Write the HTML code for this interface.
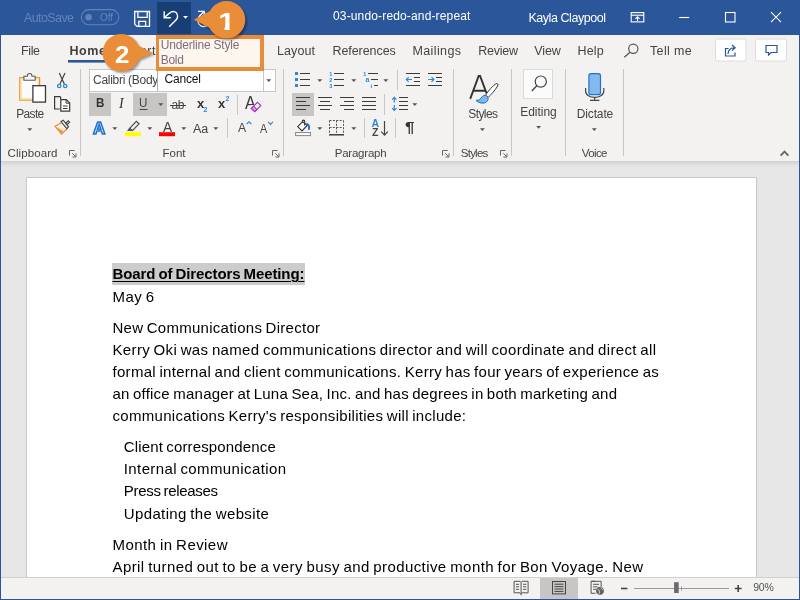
<!DOCTYPE html>
<html><head><meta charset="utf-8"><title>Word</title>
<style>
*{box-sizing:border-box;margin:0;padding:0}
html,body{width:800px;height:600px;overflow:hidden;background:#e6e6e6;font-family:"Liberation Sans",sans-serif}
#app{position:absolute;left:0;top:0;width:800px;height:600px;overflow:hidden;background:#e6e6e6;will-change:transform}
.abs,.t{position:absolute;white-space:pre}
.t{font-size:12px;color:#444}
#title{position:absolute;left:0;top:0;width:800px;height:35px;background:#2b579a}
#tabs{position:absolute;left:1px;top:35px;width:798px;height:31px;background:#f3f2f1}
#ribbon{position:absolute;left:1px;top:66px;width:798px;height:95px;background:#f3f2f1}
#shadow{position:absolute;left:1px;top:161px;width:798px;height:6px;background:linear-gradient(#cfcfcf,#e0e0e0 60%,#e6e6e6)}
#page{position:absolute;left:26px;top:177px;width:731px;height:400px;background:#fff;border:1px solid #c8c8c8;border-bottom:none}
#status{position:absolute;left:1px;top:577px;width:798px;height:22px;background:#f3f2f1;border-top:1px solid #d0d0d0}
.hl{position:absolute;background:#c8c6c4}
</style></head><body><div id="app">
<div id="title"></div>
<div id="tabs"></div>
<div id="ribbon"></div>
<div id="shadow"></div>
<div id="page"></div>
<div id="status"></div>
<!-- ribbon button states -->
<div class="hl" style="left:89px;top:93px;width:22px;height:22.5px"></div>
<div class="hl" style="left:133px;top:93px;width:34px;height:22.5px"></div>
<div class="hl" style="left:292px;top:93px;width:22px;height:22.5px"></div>
<div class="hl" style="left:540px;top:578px;width:38px;height:21px"></div>
<!-- font name combo -->
<div class="abs" style="left:89px;top:69px;width:187px;height:22.5px;background:#fff;border:1px solid #c6c6c6"></div>
<div class="abs" style="left:262.5px;top:69px;width:1px;height:22.5px;background:#c6c6c6"></div>
<!-- editing icon box -->
<div class="abs" style="left:523px;top:69px;width:30px;height:30px;background:#fbfbfb;border:1px solid #dadada"></div>
<!-- heading selection -->
<div class="abs" style="left:112px;top:263px;width:193px;height:21.5px;background:#cccccc"></div>
<div class="t" style="left:24.0px;top:11px;font-size:12.5px;line-height:15px;letter-spacing:-0.603px;color:#6485bc;">AutoSave</div>
<div class="t" style="left:100.1px;top:12px;font-size:10px;line-height:12px;letter-spacing:-0.128px;color:#6485bc;">Off</div>
<div class="t" style="left:333.0px;top:9px;font-size:12px;line-height:14px;letter-spacing:0.150px;color:#fff;">03-undo-redo-and-repeat</div>
<div class="t" style="left:528.4px;top:11px;font-size:12.5px;line-height:15px;letter-spacing:-0.445px;color:#fff;">Kayla Claypool</div>
<div class="t" style="left:21.0px;top:44px;font-size:12.5px;line-height:15px;letter-spacing:-0.385px;color:#444;">File</div>
<div class="t" style="left:69.5px;top:44px;font-size:12.5px;line-height:15px;letter-spacing:0.589px;color:#404040;font-weight:700;">Home</div>
<div class="t" style="left:122.0px;top:44px;font-size:12.5px;line-height:15px;letter-spacing:0.427px;color:#444;">Insert</div>
<div class="t" style="left:277.0px;top:44px;font-size:12.5px;line-height:15px;letter-spacing:0.094px;color:#444;">Layout</div>
<div class="t" style="left:332.5px;top:44px;font-size:12.5px;line-height:15px;letter-spacing:-0.071px;color:#444;">References</div>
<div class="t" style="left:412.5px;top:44px;font-size:12.5px;line-height:15px;letter-spacing:0.377px;color:#444;">Mailings</div>
<div class="t" style="left:478.3px;top:44px;font-size:12.5px;line-height:15px;letter-spacing:-0.260px;color:#444;">Review</div>
<div class="t" style="left:534.3px;top:44px;font-size:12.5px;line-height:15px;letter-spacing:-0.125px;color:#444;">View</div>
<div class="t" style="left:577.5px;top:44px;font-size:12.5px;line-height:15px;letter-spacing:0.194px;color:#444;">Help</div>
<div class="t" style="left:650.0px;top:44px;font-size:12.5px;line-height:15px;letter-spacing:0.368px;color:#444;">Tell me</div>
<div class="t" style="left:16.3px;top:107px;font-size:12px;line-height:14px;letter-spacing:-0.697px;color:#444;">Paste</div>
<div class="t" style="left:7.5px;top:146px;font-size:11.5px;line-height:14px;letter-spacing:0.096px;color:#444;">Clipboard</div>
<div class="t" style="left:93.0px;top:73px;font-size:12px;line-height:14px;letter-spacing:-0.284px;color:#444;">Calibri (Body)</div>
<div class="t" style="left:162.5px;top:146px;font-size:11.5px;line-height:14px;letter-spacing:-0.005px;color:#444;">Font</div>
<div class="t" style="left:334.7px;top:146px;font-size:11.5px;line-height:14px;letter-spacing:-0.215px;color:#444;">Paragraph</div>
<div class="t" style="left:468.3px;top:107px;font-size:12px;line-height:14px;letter-spacing:-0.598px;color:#444;">Styles</div>
<div class="t" style="left:460.8px;top:146px;font-size:11.5px;line-height:14px;letter-spacing:-0.766px;color:#444;">Styles</div>
<div class="t" style="left:520.3px;top:105px;font-size:12px;line-height:14px;letter-spacing:-0.051px;color:#444;">Editing</div>
<div class="t" style="left:576.7px;top:107px;font-size:12px;line-height:14px;letter-spacing:-0.127px;color:#444;">Dictate</div>
<div class="t" style="left:581.7px;top:146px;font-size:11.5px;line-height:14px;letter-spacing:-0.585px;color:#444;">Voice</div>
<div class="t" style="left:753.2px;top:581px;font-size:10.5px;line-height:13px;letter-spacing:-0.208px;color:#555;">90%</div>
<div class="t" style="left:112.5px;top:265px;font-size:15px;line-height:18px;letter-spacing:-0.097px;color:#000;font-weight:700;word-spacing:-1px;text-decoration:underline;text-decoration-thickness:1px;text-underline-offset:1.5px;">Board of Directors Meeting:</div>
<div class="t" style="left:112.5px;top:288px;font-size:15px;line-height:18px;letter-spacing:0.410px;color:#000;word-spacing:-1px;">May 6</div>
<div class="t" style="left:112.5px;top:319px;font-size:15px;line-height:18px;letter-spacing:0.267px;color:#000;word-spacing:-1px;">New Communications Director</div>
<div class="t" style="left:112.5px;top:341px;font-size:15px;line-height:18px;letter-spacing:0.348px;color:#000;word-spacing:-1px;">Kerry Oki was named communications director and will coordinate and direct all</div>
<div class="t" style="left:112.5px;top:363px;font-size:15px;line-height:18px;letter-spacing:0.300px;color:#000;word-spacing:-1px;">formal internal and client communications. Kerry has four years of experience as</div>
<div class="t" style="left:112.5px;top:385px;font-size:15px;line-height:18px;letter-spacing:0.219px;color:#000;word-spacing:-1px;">an office manager at Luna Sea, Inc. and has degrees in both marketing and</div>
<div class="t" style="left:112.5px;top:407px;font-size:15px;line-height:18px;letter-spacing:0.295px;color:#000;word-spacing:-1px;">communications Kerry&#x27;s responsibilities will include:</div>
<div class="t" style="left:123.8px;top:438px;font-size:15px;line-height:18px;letter-spacing:0.145px;color:#000;word-spacing:-1px;">Client correspondence</div>
<div class="t" style="left:123.8px;top:460px;font-size:15px;line-height:18px;letter-spacing:0.387px;color:#000;word-spacing:-1px;">Internal communication</div>
<div class="t" style="left:123.8px;top:482px;font-size:15px;line-height:18px;letter-spacing:-0.309px;color:#000;word-spacing:-1px;">Press releases</div>
<div class="t" style="left:123.8px;top:505px;font-size:15px;line-height:18px;letter-spacing:0.363px;color:#000;word-spacing:-1px;">Updating the website</div>
<div class="t" style="left:112.5px;top:536px;font-size:15px;line-height:18px;letter-spacing:0.436px;color:#000;word-spacing:-1px;">Month in Review</div>
<div class="t" style="left:112.5px;top:558px;font-size:15px;line-height:18px;letter-spacing:0.417px;color:#000;word-spacing:-1px;">April turned out to be a very busy and productive month for Bon Voyage. New</div>

<svg class="abs" style="left:0;top:0" width="800" height="600" viewBox="0 0 800 600" fill="none" stroke-linecap="butt">
<!-- ===== title bar ===== -->
<rect x="81.4" y="9.6" width="37.4" height="15.2" rx="7.6" stroke="#6183bb" stroke-width="1.1"/>
<circle cx="88.6" cy="17.2" r="3.3" fill="#6183bb"/>
<!-- save -->
<path d="M134.7 11.5H149.5V26.4H137L134.7 24.1Z" stroke="#fff" stroke-width="1.3"/>
<path d="M137.9 11.5V17.3H147.2V11.5" stroke="#fff" stroke-width="1.3"/>
<path d="M138.8 26.4V21.3H145.6V26.4" stroke="#fff" stroke-width="1.3"/>
<!-- undo button -->
<rect x="157" y="2" width="34" height="31.8" fill="#173f75"/>
<path d="M164.2 11.2V17.7H170.8" stroke="#fff" stroke-width="1.4"/>
<path d="M164.6 17.3L169.6 13.1C172.6 10.6 176.2 11.2 177.3 14.6C178.2 17.3 177 19.2 175 21.1L169.2 26.7" stroke="#fff" stroke-width="1.4"/>
<path d="M183 15.9H188L185.5 18.8Z" fill="#fff"/>
<!-- redo (mostly hidden) -->
<path d="M198 11.3H204.2V17.6" stroke="#fff" stroke-width="1.3"/>
<path d="M204 11.6L199.6 16C196.4 19.2 197.4 24 201 25.8C203.2 26.9 206 26.5 208 25" stroke="#fff" stroke-width="1.3"/>
<!-- ribbon display options -->
<rect x="631.2" y="12.6" width="12.6" height="9.3" stroke="#fff" stroke-width="1.1"/>
<path d="M631.2 15.2H643.8" stroke="#fff" stroke-width="1.1"/>
<path d="M637.5 21V16.8M635.4 18.8L637.5 16.7L639.6 18.8" stroke="#fff" stroke-width="1.1"/>
<!-- min / max / close -->
<path d="M679.2 17.5H689.2" stroke="#fff" stroke-width="1.1"/>
<rect x="725.5" y="12.5" width="9.5" height="9.5" stroke="#fff" stroke-width="1.1"/>
<path d="M771 12.2L781 22.2M781 12.2L771 22.2" stroke="#fff" stroke-width="1.1"/>
<!-- ===== tab row ===== -->
<rect x="68" y="60" width="37" height="2.6" fill="#2b579a"/>
<!-- tell me search -->
<circle cx="633.3" cy="48.8" r="4.6" stroke="#555" stroke-width="1.2"/>
<path d="M630 52.2L624.3 57.3" stroke="#555" stroke-width="1.3"/>
<!-- share / comments buttons -->
<rect x="715.5" y="39" width="30.5" height="22" rx="2" fill="#fff" stroke="#dcdcdc" stroke-width="1"/>
<rect x="755.5" y="39" width="31" height="22" rx="2" fill="#fff" stroke="#dcdcdc" stroke-width="1"/>
<path d="M728.5 48.5H725.5V56H735V52.5" stroke="#2b579a" stroke-width="1.2"/>
<path d="M728 54C728.3 50 730.5 47.8 734 47.8M732 45L735.2 47.8L732 50.6" stroke="#2b579a" stroke-width="1.2"/>
<path d="M766 45.5H777V52.5H771L768.5 55V52.5H766Z" stroke="#2b579a" stroke-width="1.2"/>
<!-- collapse ribbon chevron -->
<path d="M780.6 155.6L784.5 151.7L788.4 155.6" stroke="#666" stroke-width="1.9"/>
<!-- ===== group separators ===== -->
<g stroke="#c8c6c4" stroke-width="1">
<path d="M80.5 69V156M283.5 69V156M453.5 69V156M511.5 69V156M565.5 69V156M623.5 69V156"/>
<path d="M237.5 95V115M227.5 118V138M397.5 70V90M384.5 94V115M364.5 118V138M395.5 118V138"/>
</g>
<!-- dialog launchers -->
<g stroke="#666" stroke-width="1"><path d="M69.5 155.6V150.5H74.6M72.3 153.3L75.6 156.6M76.0 153.4V157.0H72.4"/><path d="M272.5 155.6V150.5H277.6M275.3 153.3L278.6 156.6M279.0 153.4V157.0H275.4"/><path d="M442.5 155.6V150.5H447.6M445.3 153.3L448.6 156.6M449.0 153.4V157.0H445.4"/><path d="M500.5 155.6V150.5H505.6M503.3 153.3L506.6 156.6M507.0 153.4V157.0H503.4"/></g>
<!-- dropdown arrows -->
<g fill="#555"><path d="M27.3 128.2H32.3L29.8 131.0Z"/><path d="M158.3 103.2H163.3L160.8 106.0Z"/><path d="M112.3 127.2H117.3L114.8 130.0Z"/><path d="M147.3 127.2H152.3L149.8 130.0Z"/><path d="M181.3 127.2H186.3L183.8 130.0Z"/><path d="M213.3 127.2H218.3L215.8 130.0Z"/><path d="M266.3 79.2H271.3L268.8 82.0Z"/><path d="M317.3 79.2H322.3L319.8 82.0Z"/><path d="M351.3 79.2H356.3L353.8 82.0Z"/><path d="M383.3 79.2H388.3L385.8 82.0Z"/><path d="M412.3 103.2H417.3L414.8 106.0Z"/><path d="M317.3 127.2H322.3L319.8 130.0Z"/><path d="M351.3 127.2H356.3L353.8 130.0Z"/><path d="M479.9 128.2H484.9L482.4 131.0Z"/><path d="M536.1 126.0H541.1L538.6 128.8Z"/><path d="M591.8 128.2H596.8L594.3 131.0Z"/></g>
</svg>

<svg class="abs" style="left:0;top:0" width="800" height="600" viewBox="0 0 800 600" fill="none">
<!-- ===== Clipboard group ===== -->
<!-- paste -->
<rect x="19.8" y="77.7" width="19.8" height="22.4" fill="#fbfbfa" stroke="#e8902e" stroke-width="1.2"/>
<rect x="21.2" y="79" width="17" height="19.8" stroke="#fbdfa4" stroke-width="1.4"/>
<path d="M23.9 80.2V76.2H27.3C27.3 72.6 32 72.6 32 76.2H35.2V80.2Z" fill="#f6f6f6" stroke="#5a5a5a" stroke-width="1.1"/>
<rect x="32.9" y="85.7" width="12.6" height="16.4" fill="#fff" stroke="#3a3a3a" stroke-width="1.3"/>
<!-- cut -->
<path d="M59.3 73L64.3 84M65 73L60 84" stroke="#444" stroke-width="1.2"/>
<circle cx="59.2" cy="86" r="1.7" stroke="#2b88d8" stroke-width="1.3"/>
<circle cx="65.2" cy="86" r="1.7" stroke="#2b88d8" stroke-width="1.3"/>
<!-- copy -->
<path d="M60.6 96.7H54.6V109H59.8" stroke="#3a3a3a" stroke-width="1.2"/>
<path d="M60.6 96.7V99" stroke="#3a3a3a" stroke-width="1.2"/>
<path d="M60.8 99.6H66.3L69.7 103V111.2H60.8Z" fill="#fff" stroke="#3a3a3a" stroke-width="1.2"/>
<path d="M66.1 99.8V103.2H69.5" stroke="#3a3a3a" stroke-width="1"/>
<path d="M63 106H67.6M63 108.5H67.6" stroke="#3a3a3a" stroke-width="1"/>
<!-- format painter -->
<path d="M55 126.2L62 122.4L67 128.6L61.5 134.2Z" fill="#fdf1e3" stroke="#e8892b" stroke-width="1.1"/>
<path d="M55.2 126.3L61.6 133.8L63.2 131Z" fill="#ee9a44"/>
<path d="M61 121.5L63.2 120.2L68.6 126.8L66.8 128.6Z" fill="#f3f2f1" stroke="#444" stroke-width="1.1"/>
<path d="M65.3 123.5L68.3 120.8L69.6 122.2L66.6 125" stroke="#444" stroke-width="1.1"/>
<!-- ===== Font group ===== -->
<!-- text effects A -->
<text x="93" y="133.8" style="font-family:'Liberation Sans',sans-serif" font-weight="700" font-size="17" fill="#fff" stroke="#1f74d1" stroke-width="1.6">A</text>
<!-- highlighter -->
<rect x="125" y="132.2" width="16" height="4" fill="#ffff00"/>
<path d="M129.6 128.4L136.4 121.4L139 123.8L132.6 130.4Z" stroke="#4a4a4a" stroke-width="1.2"/>
<path d="M127 131L129.4 127.8L133 130.8Z" fill="#4a4a4a"/>
<!-- font color -->
<rect x="159" y="132.2" width="16" height="4" fill="#ff0000"/>
<!-- font size arrows carets -->
<path d="M246.6 124.2L249 121.8L251.4 124.2" stroke="#2b88d8" stroke-width="1.2"/>
<path d="M268.1 121.9L270.5 124.3L272.9 121.9" stroke="#2b88d8" stroke-width="1.2"/>
<!-- strikethrough line -->
<path d="M170 105.5H186" stroke="#444" stroke-width="1"/>
<!-- underline glyph line -->
<path d="M139.5 109.5H147.5" stroke="#444" stroke-width="1"/>
<!-- clear formatting eraser -->
<path d="M251.4 108.4L257.4 102.4L260.8 105.5L254.7 111.6Z" fill="#fff" stroke="#a43ab6" stroke-width="1.2"/>
<path d="M251.4 108.4L253.6 106.2L256.9 109.4L254.7 111.6Z" fill="#d9a3e2" stroke="#a43ab6" stroke-width="1.1"/>
<!-- ===== Paragraph group ===== -->
<!-- bullets -->
<g fill="#2b88d8"><rect x="295" y="72" width="3" height="3"/><rect x="295" y="78" width="3" height="3"/><rect x="295" y="84" width="3" height="3"/></g>
<path d="M300 73.5H310M300 79.5H310M300 85.5H310" stroke="#3b3b3b" stroke-width="1"/>
<!-- numbering -->
<path d="M334 73.5H344M334 79.5H344M334 85.5H344" stroke="#3b3b3b" stroke-width="1"/>
<!-- multilevel -->
<path d="M368 73.5H378M371 79.5H378M374 85.5H378" stroke="#3b3b3b" stroke-width="1"/>
<!-- decrease indent -->
<path d="M406 73.5H420M414 77.5H420M414 81.5H420M406 85.5H420" stroke="#3b3b3b" stroke-width="1"/>
<path d="M406.4 79.5H412M408.7 77.1L406.3 79.5L408.7 81.9" stroke="#2b88d8" stroke-width="1.2"/>
<!-- increase indent -->
<path d="M428 73.5H442M436 77.5H442M436 81.5H442M428 85.5H442" stroke="#3b3b3b" stroke-width="1"/>
<path d="M428.2 79.5H433.8M431.5 77.1L433.9 79.5L431.5 81.9" stroke="#2b88d8" stroke-width="1.2"/>
<!-- align left/center/right/justify -->
<path d="M296 97.5H310M296 101.5H306M296 105.5H310M296 109.5H306" stroke="#3b3b3b" stroke-width="1"/>
<path d="M318 97.5H332M320 101.5H330M318 105.5H332M320 109.5H330" stroke="#3b3b3b" stroke-width="1"/>
<path d="M340 97.5H354M344 101.5H354M340 105.5H354M344 109.5H354" stroke="#3b3b3b" stroke-width="1"/>
<path d="M362 97.5H376M362 101.5H376M362 105.5H376M362 109.5H376" stroke="#3b3b3b" stroke-width="1"/>
<!-- line spacing -->
<path d="M399 97.5H408M399 101.5H408M399 105.5H408M399 109.5H408" stroke="#3b3b3b" stroke-width="1"/>
<path d="M394.3 97.4V102.6M392.1 99.7L394.3 97.4L396.5 99.7M394.3 105V110.4M392.1 108.1L394.3 110.4L396.5 108.1" stroke="#2b88d8" stroke-width="1.2"/>
<!-- shading bucket -->
<rect x="295.6" y="132.6" width="14.9" height="3" fill="#fff" stroke="#858585" stroke-width="1"/>
<path d="M297.7 126.6L302.6 121.7L307.2 125.5L302 130.9Z" fill="#fbfbfb" stroke="#333" stroke-width="1.1"/>
<path d="M302.3 122.4V121.5C302.3 119.7 304.7 119.7 304.7 121.5V125.6" stroke="#333" stroke-width="1.1"/>
<path d="M306.4 123.6C308.6 124.2 309.6 126.6 308.8 129.8" stroke="#1a6fc6" stroke-width="1.9"/>
<!-- borders -->
<path d="M329.5 120.5H343.5M329.5 120.5V134.5M343.5 120.5V134.5M336.5 120.5V134.5M329.5 127.5H343.5" stroke="#555" stroke-width="1" stroke-dasharray="2 1.4"/>
<path d="M329 134.8H344" stroke="#333" stroke-width="1.4"/>
<!-- sort -->
<path d="M384.5 121V135M381.2 131.6L384.5 135.2L387.8 131.6" stroke="#444" stroke-width="1.2"/>
<!-- ===== Styles ===== -->
<path d="M470.2 98.9L478.7 75.9H480.1L486.6 93.4M473.8 90.8H485.6" stroke="#333" stroke-width="1.9"/>
<path transform="translate(-1.2 0)" d="M486.8 95.4C489 91 495 84.8 497.4 83.7C499 83.1 499.6 84.4 498.8 86C496.4 90.4 491.2 95.6 489.4 97.4Z" fill="#fff" stroke="#3a3a3a" stroke-width="1"/>
<path d="M476 100.4C479.4 100.6 480.8 98.5 482 96.9C483.5 94.9 486.4 94.7 487.6 96.8C488.8 99.1 487.6 102 484.6 102.9C481.4 103.7 478 102.4 476 100.4Z" fill="#80b8ec" stroke="#1a6cc4" stroke-width="1"/>
<!-- ===== Editing ===== -->
<circle cx="540.8" cy="81.6" r="5.6" stroke="#444" stroke-width="1.2"/>
<path d="M536.8 85.8L531.8 91" stroke="#444" stroke-width="1.3"/>
<!-- ===== Dictate ===== -->
<rect x="588.9" y="73.6" width="11.6" height="21" rx="2.2" fill="#83b9ee" stroke="#1f74c9" stroke-width="1.2"/>
<path d="M585.6 88V91C585.6 99.5 603.8 99.5 603.8 91V88" stroke="#444" stroke-width="1.2"/>
<path d="M594.7 97.4V100.2M590 100.4H599.4" stroke="#444" stroke-width="1.2"/>
<!-- ===== Status bar ===== -->
<g transform="translate(0.6 -1.2)">
<path d="M513.5 582.5H519.5L520.5 583.5L521.5 582.5H527.5V594H521.5L520.5 595L519.5 594H513.5Z" stroke="#555" stroke-width="1"/>
<path d="M520.5 583.5V596.6M515.3 585.5H518.5M515.3 588H518.5M515.3 590.5H518.5M522.5 585.5H525.7M522.5 588H525.7M522.5 590.5H525.7" stroke="#555" stroke-width="1"/>
</g>
<!-- print layout -->
<rect x="552.5" y="581.5" width="13" height="12.4" stroke="#444" stroke-width="1"/>
<path d="M554.5 584.2H563.5M554.5 586.6H563.5M554.5 589H563.5M554.5 591.4H563.5" stroke="#444" stroke-width="1"/>
<!-- web layout -->
<g transform="translate(-0.4 -1.2)">
<path d="M596 582.5H591.5V594.5H596M591.5 582.5H601.5V588" stroke="#555" stroke-width="1"/>
<path d="M593.5 585.5H599.5M593.5 588H598M593.5 590.5H596.5" stroke="#555" stroke-width="1"/>
<circle cx="600.4" cy="592" r="3.6" fill="#666" stroke="#555" stroke-width="0.8"/>
<path d="M598 590.3C600 591.3 600.4 592.8 599.4 595.3M601.4 588.8C602 590.3 603 590.8 604 591.3" stroke="#eee" stroke-width="0.8"/>
</g>
<!-- zoom slider -->
<path d="M621 588.5H627.4" stroke="#444" stroke-width="1.6"/>
<path d="M634 588.5H729" stroke="#9a9a9a" stroke-width="1"/>
<path d="M681.5 586.3V590.7" stroke="#9a9a9a" stroke-width="1"/>
<rect x="674.1" y="582.2" width="4.6" height="10.8" fill="#6a6a6a"/>
<path d="M734.8 588.5H741.6M738.2 585.1V591.9" stroke="#444" stroke-width="1.6"/>
</svg>
<!-- glyph-based icons (real text) -->
<div class="t" style="left:96.4px;top:95px;font-size:13.5px;line-height:16px;font-weight:700;color:#333;transform:scaleX(.86);transform-origin:0 0">B</div>
<div class="t" style="left:119px;top:95.6px;font-size:14px;line-height:16px;font-style:italic;font-family:'Liberation Serif',serif;color:#333;font-size:14px">I</div>
<div class="t" style="left:139.2px;top:95.4px;font-size:13.5px;line-height:16px;color:#444;letter-spacing:-0.5px;transform:scaleX(.86);transform-origin:0 0">U</div>
<div class="t" style="left:171.5px;top:97.5px;font-size:12px;line-height:14px;color:#444;letter-spacing:-0.4px">ab</div>
<div class="t" style="left:197px;top:96.4px;font-size:13px;line-height:16px;font-weight:700;color:#333">x</div>
<div class="t" style="left:203.6px;top:106px;font-size:7px;line-height:8px;font-weight:700;color:#2b88d8">2</div>
<div class="t" style="left:218px;top:96.4px;font-size:13px;line-height:16px;font-weight:700;color:#333">x</div>
<div class="t" style="left:225.5px;top:95px;font-size:7px;line-height:8px;font-weight:700;color:#2b88d8">2</div>
<div class="t" style="left:244.6px;top:93.3px;font-size:17.5px;line-height:20px;color:#3a3a3a;transform:scaleX(.92);transform-origin:0 0;clip-path:polygon(0 0,100% 0,100% 11.6px,6px 11.6px,6px 100%,0 100%)">A</div>
<div class="t" style="left:162.6px;top:118.8px;font-size:15px;line-height:16px;color:#444;transform:scaleX(.92);transform-origin:0 0">A</div>
<div class="t" style="left:193px;top:121.6px;font-size:12.5px;line-height:14px;color:#444;letter-spacing:-0.2px">Aa</div>
<div class="t" style="left:238px;top:120.8px;font-size:13.5px;line-height:14px;color:#444;transform:scaleX(.9);transform-origin:0 0">A</div>
<div class="t" style="left:260px;top:122.2px;font-size:12px;line-height:14px;color:#444;transform:scaleX(.9);transform-origin:0 0">A</div>
<div class="t" style="left:329.2px;top:71.3px;font-size:5.5px;line-height:6.2px;font-weight:700;color:#2b88d8">1</div>
<div class="t" style="left:329.2px;top:76.5px;font-size:5.5px;line-height:6.2px;font-weight:700;color:#2b88d8">2</div>
<div class="t" style="left:329.2px;top:82.7px;font-size:5.5px;line-height:6.2px;font-weight:700;color:#2b88d8">3</div>
<div class="t" style="left:363.2px;top:71.3px;font-size:5.5px;line-height:6.2px;font-weight:700;color:#2b88d8">1</div>
<div class="t" style="left:365.6px;top:75.8px;font-size:7px;line-height:7px;font-weight:700;color:#2b88d8">a</div>
<div class="t" style="left:370.6px;top:82.6px;font-size:6px;line-height:6.2px;font-weight:700;color:#2b88d8">i</div>
<div class="t" style="left:371.4px;top:118.4px;font-size:10.5px;line-height:10px;font-weight:700;color:#2b88d8">A</div>
<div class="t" style="left:372px;top:127px;font-size:10.5px;line-height:10px;font-weight:700;color:#444">Z</div>
<div class="t" style="left:405.4px;top:119px;font-size:14px;line-height:16px;font-weight:700;color:#333;transform:scaleX(1.22);transform-origin:0 0">¶</div>

<!-- undo dropdown -->
<div class="abs" style="left:157px;top:35px;width:105.5px;height:55.6px;background:#fff;border-left:1px solid #ababab"></div>
<div class="abs" style="left:156px;top:35px;width:108px;height:36px;background:#fdf6ef;border:4px solid #e98c3a;border-left-width:3.5px"></div>
<div class="t" style="left:160.8px;top:37.6px;font-size:12px;line-height:14px;letter-spacing:-0.2px;color:#816b7c">Underline Style</div>
<div class="t" style="left:160.8px;top:53px;font-size:12px;line-height:14px;letter-spacing:-0.3px;color:#816b7c">Bold</div>
<div class="t" style="left:164.5px;top:71.5px;font-size:12px;line-height:14px;letter-spacing:-0.2px;color:#111">Cancel</div>
<!-- callouts -->
<svg class="abs" style="left:0;top:0" width="800" height="600" viewBox="0 0 800 600">
<defs><filter id="sh" x="-20%" y="-20%" width="150%" height="150%"><feGaussianBlur stdDeviation="1.1"/></filter></defs>
<g transform="translate(1.6 1.8)" fill="#000" opacity=".38" filter="url(#sh)">
<circle cx="226.5" cy="19.8" r="18.8"/><path d="M193.8 19.8L212 10.5V29.5Z"/>
<circle cx="121.2" cy="52.8" r="18.7"/><path d="M153 52.9L134 44V61Z"/>
</g>
<g fill="#ea8d38">
<circle cx="226.5" cy="19.8" r="18.8"/><path d="M193.8 19.8L212 10V29Z"/>
<circle cx="121.2" cy="52.8" r="18.7"/><path d="M153 52.9L134 43.5V61.5Z"/>
</g>
<clipPath id="c1" clipPathUnits="userSpaceOnUse"><path d="M-8 -20H8V-3.1H2.45V1H-1.75V-3.1H-8Z"/></clipPath>
<text transform="translate(226.6 30) scale(1.25 1)" clip-path="url(#c1)" style="font-family:'Liberation Sans',sans-serif" font-weight="700" font-size="24.2" fill="#fff" text-anchor="middle">1</text>
<text transform="translate(122.1 63) scale(1.1 1)" style="font-family:'Liberation Sans',sans-serif" font-weight="700" font-size="23.5" fill="#fff" text-anchor="middle">2</text>
</svg>

<div class="abs" style="left:0;top:0;width:1px;height:600px;background:#2b579a"></div>
<div class="abs" style="left:799px;top:0;width:1px;height:600px;background:#2b579a"></div>
<div class="abs" style="left:0;top:599px;width:800px;height:1px;background:#2b579a"></div>
</div></body></html>
